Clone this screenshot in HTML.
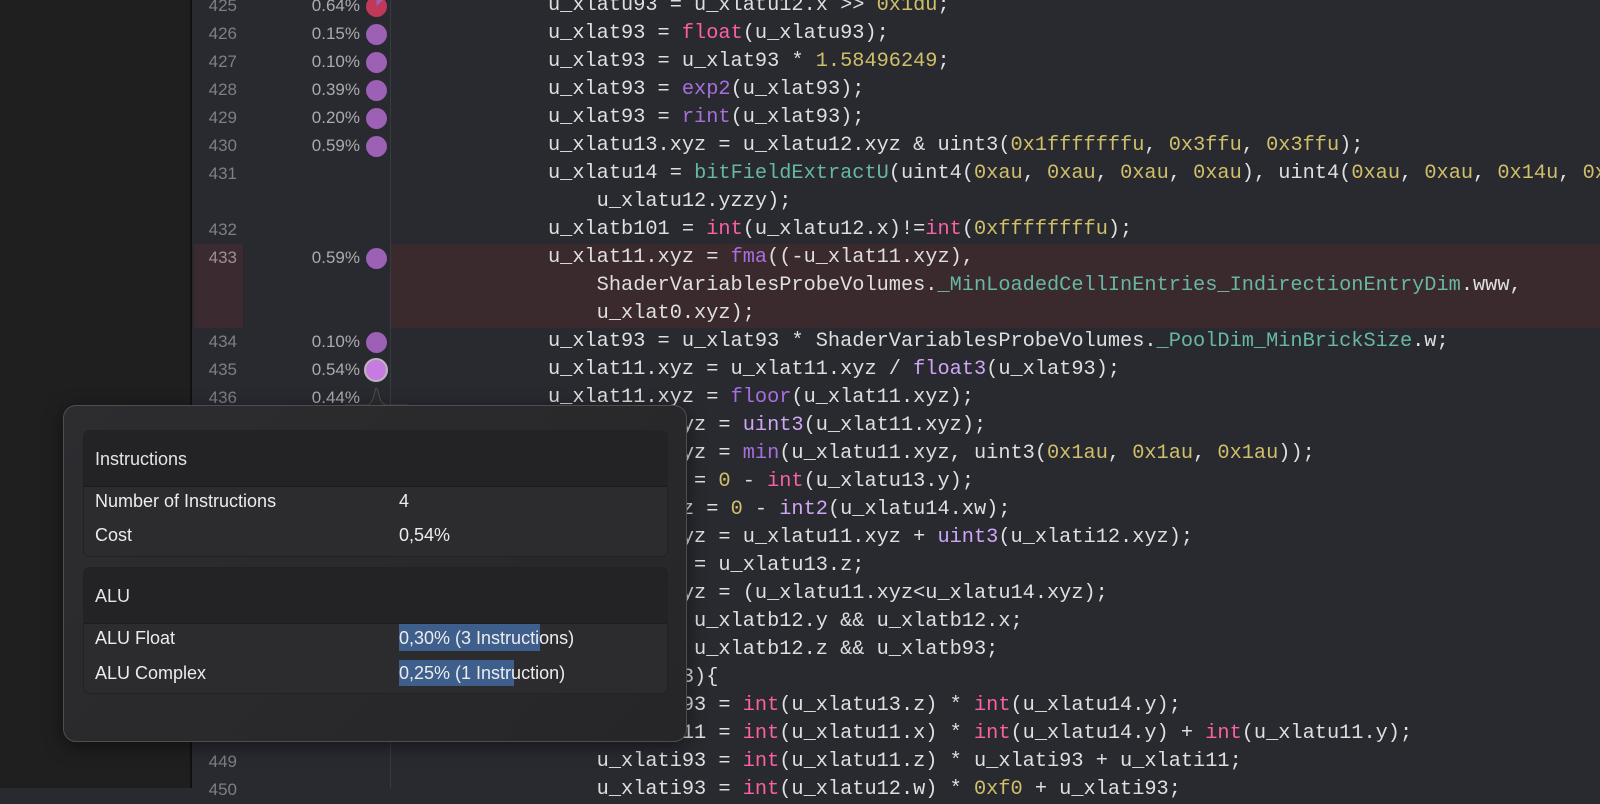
<!DOCTYPE html>
<html><head><meta charset="utf-8"><style>
*{margin:0;padding:0;box-sizing:border-box}
body{width:1600px;height:788px;overflow:hidden;background:#292a30;position:relative;font-family:"Liberation Sans",sans-serif}
#left{position:absolute;left:0;top:0;width:192px;height:788px;background:#1f1f1f;border-right:2px solid #111}
#sep{position:absolute;left:390px;top:0;width:1px;height:788px;background:#3a3b40}
.hl1{position:absolute;left:194px;top:244px;width:49px;height:84px;background:#3b2b30}
.hl2{position:absolute;left:391px;top:244px;width:1209px;height:84px;background:#3a2a2e}
.r{position:absolute;height:28px;line-height:28px}
.ln{left:194px;width:43px;text-align:right;color:#7e7f85;font-size:17px}
.pc{left:250px;width:110px;text-align:right;color:#aaaaae;font-size:17px}
.dot{position:absolute;width:21px;height:21px;border-radius:50%;background:#9c60b4;left:365.5px}
.code{left:548px;font-family:"Liberation Mono",monospace;font-size:20.3px;color:#dfdfe0;white-space:pre}
.k{color:#fc5fa3}.p{color:#a66fdc}.l{color:#cfa6f5}.t{color:#67b7a4}.n{color:#d0bf69}
#pop{position:absolute;left:63px;top:405px;width:624px;height:337px;border-radius:13px;background:linear-gradient(135deg,#2d2d30,#262628);border:1px solid #4e4e52;box-shadow:0 4px 18px rgba(0,0,0,.5)}
.sec{position:absolute;left:19px;width:585px;border-radius:7px;background:#2c2c2f;border:1px solid #222224;overflow:hidden}
.sh{height:56px;background:#232325;border-bottom:1px solid #1d1d1f;color:#e4e4e6;font-size:18px;line-height:56px;padding-left:11px}
.row{position:absolute;left:11px;color:#ececee;font-size:18px;line-height:26px}
.val{position:absolute;left:315px;color:#ececee;font-size:18px;line-height:26px;white-space:nowrap}
.sel{position:absolute;background:#3e5f8c}
</style></head><body>
<div id="left"></div>
<div class="hl1"></div><div class="hl2"></div>
<div id="sep"></div>

<div class="r ln" style="top:-8px">425</div><div class="r pc" style="top:-8px">0.64%</div>
<div class="dot" style="top:-4.5px;background:conic-gradient(#9c60b4 0 12%,#c0395a 12% 100%)"></div>
<div class="r code" style="top:-8px">u_xlatu93 = u_xlatu12.x &gt;&gt; <span class="n">0x1du</span>;</div>

<div class="r ln" style="top:20px">426</div><div class="r pc" style="top:20px">0.15%</div><div class="dot" style="top:23.5px"></div>
<div class="r code" style="top:20px">u_xlat93 = <span class="k">float</span>(u_xlatu93);</div>

<div class="r ln" style="top:48px">427</div><div class="r pc" style="top:48px">0.10%</div><div class="dot" style="top:51.5px"></div>
<div class="r code" style="top:48px">u_xlat93 = u_xlat93 * <span class="n">1.58496249</span>;</div>

<div class="r ln" style="top:76px">428</div><div class="r pc" style="top:76px">0.39%</div><div class="dot" style="top:79.5px"></div>
<div class="r code" style="top:76px">u_xlat93 = <span class="p">exp2</span>(u_xlat93);</div>

<div class="r ln" style="top:104px">429</div><div class="r pc" style="top:104px">0.20%</div><div class="dot" style="top:107.5px"></div>
<div class="r code" style="top:104px">u_xlat93 = <span class="p">rint</span>(u_xlat93);</div>

<div class="r ln" style="top:132px">430</div><div class="r pc" style="top:132px">0.59%</div><div class="dot" style="top:135.5px"></div>
<div class="r code" style="top:132px">u_xlatu13.xyz = u_xlatu12.xyz &amp; uint3(<span class="n">0x1fffffffu</span>, <span class="n">0x3ffu</span>, <span class="n">0x3ffu</span>);</div>

<div class="r ln" style="top:160px">431</div>
<div class="r code" style="top:160px">u_xlatu14 = <span class="t">bitFieldExtractU</span>(uint4(<span class="n">0xau</span>, <span class="n">0xau</span>, <span class="n">0xau</span>, <span class="n">0xau</span>), uint4(<span class="n">0xau</span>, <span class="n">0xau</span>, <span class="n">0x14u</span>, <span class="n">0x1du</span>),</div>
<div class="r code" style="top:188px">    u_xlatu12.yzzy);</div>

<div class="r ln" style="top:216px">432</div>
<div class="r code" style="top:216px">u_xlatb101 = <span class="k">int</span>(u_xlatu12.x)!=<span class="k">int</span>(<span class="n">0xffffffffu</span>);</div>

<div class="r ln" style="top:244px;color:#9a9196">433</div><div class="r pc" style="top:244px">0.59%</div><div class="dot" style="top:247.5px"></div>
<div class="r code" style="top:244px">u_xlat11.xyz = <span class="p">fma</span>((-u_xlat11.xyz),</div>
<div class="r code" style="top:272px">    ShaderVariablesProbeVolumes.<span class="t">_MinLoadedCellInEntries_IndirectionEntryDim</span>.www,</div>
<div class="r code" style="top:300px">    u_xlat0.xyz);</div>

<div class="r ln" style="top:328px">434</div><div class="r pc" style="top:328px">0.10%</div><div class="dot" style="top:331.5px"></div>
<div class="r code" style="top:328px">u_xlat93 = u_xlat93 * ShaderVariablesProbeVolumes.<span class="t">_PoolDim_MinBrickSize</span>.w;</div>

<div class="r ln" style="top:356px">435</div><div class="r pc" style="top:356px">0.54%</div>
<div class="dot" style="top:358px;left:364px;width:24px;height:24px;background:#c77ae0;border:2px solid #b9b9bd"></div>
<div class="r code" style="top:356px">u_xlat11.xyz = u_xlat11.xyz / <span class="l">float3</span>(u_xlat93);</div>

<div class="r ln" style="top:384px">436</div><div class="r pc" style="top:384px">0.44%</div>
<div class="r code" style="top:384px">u_xlat11.xyz = <span class="p">floor</span>(u_xlat11.xyz);</div>

<div class="r code" style="top:412px">u_xlatu11.xyz = <span class="l">uint3</span>(u_xlat11.xyz);</div>
<div class="r code" style="top:440px">u_xlatu11.xyz = <span class="p">min</span>(u_xlatu11.xyz, uint3(<span class="n">0x1au</span>, <span class="n">0x1au</span>, <span class="n">0x1au</span>));</div>
<div class="r code" style="top:468px">u_xlati12.x = <span class="n">0</span> - <span class="k">int</span>(u_xlatu13.y);</div>
<div class="r code" style="top:496px">u_xlati12.yz = <span class="n">0</span> - <span class="l">int2</span>(u_xlatu14.xw);</div>
<div class="r code" style="top:524px">u_xlatu11.xyz = u_xlatu11.xyz + <span class="l">uint3</span>(u_xlati12.xyz);</div>
<div class="r code" style="top:552px">u_xlatu12.w = u_xlatu13.z;</div>
<div class="r code" style="top:580px">u_xlatb12.xyz = (u_xlatu11.xyz&lt;u_xlatu14.xyz);</div>
<div class="r code" style="top:608px">u_xlatb93 = u_xlatb12.y &amp;&amp; u_xlatb12.x;</div>
<div class="r code" style="top:636px">u_xlatb93 = u_xlatb12.z &amp;&amp; u_xlatb93;</div>
<div class="r code" style="top:664px">if(u_xlatb93){</div>
<div class="r code" style="top:692px">    u_xlati93 = <span class="k">int</span>(u_xlatu13.z) * <span class="k">int</span>(u_xlatu14.y);</div>
<div class="r code" style="top:720px">    u_xlati11 = <span class="k">int</span>(u_xlatu11.x) * <span class="k">int</span>(u_xlatu14.y) + <span class="k">int</span>(u_xlatu11.y);</div>
<div class="r ln" style="top:748px">449</div>
<div class="r code" style="top:748px">    u_xlati93 = <span class="k">int</span>(u_xlatu11.z) * u_xlati93 + u_xlati11;</div>
<div class="r ln" style="top:776px">450</div>
<div class="r code" style="top:776px">    u_xlati93 = <span class="k">int</span>(u_xlatu12.w) * <span class="n">0xf0</span> + u_xlati93;</div>

<svg style="position:absolute;left:345px;top:386px" width="62" height="21"><path d="M0 19 L22 19 Q26 18 28 13 L30 5 Q31 2 31 2 Q32 2 33 5 L35 13 Q37 18 41 19 L62 19 L62 21 L0 21Z" fill="#2d2d30"/><path d="M0 19 L22 19 Q26 18 28 13 L30 5 Q31 2 31 2 Q32 2 33 5 L35 13 Q37 18 41 19 L62 19" fill="none" stroke="#4e4e52"/></svg>
<div id="pop">
 <div class="sec" style="top:24px;height:127px">
  <div class="sh">Instructions</div>
  <div class="row" style="top:57px">Number of Instructions</div><div class="val" style="top:57px">4</div>
  <div class="row" style="top:91px">Cost</div><div class="val" style="top:91px">0,54%</div>
 </div>
 <div class="sec" style="top:161px;height:127px">
  <div class="sh">ALU</div>
  <div class="sel" style="left:315px;top:56px;width:141px;height:27px"></div>
  <div class="sel" style="left:315px;top:92px;width:115px;height:26px"></div>
  <div class="row" style="top:57px">ALU Float</div><div class="val" style="top:57px">0,30% (3 Instructions)</div>
  <div class="row" style="top:92px">ALU Complex</div><div class="val" style="top:92px">0,25% (1 Instruction)</div>
 </div>
</div>
</body></html>
